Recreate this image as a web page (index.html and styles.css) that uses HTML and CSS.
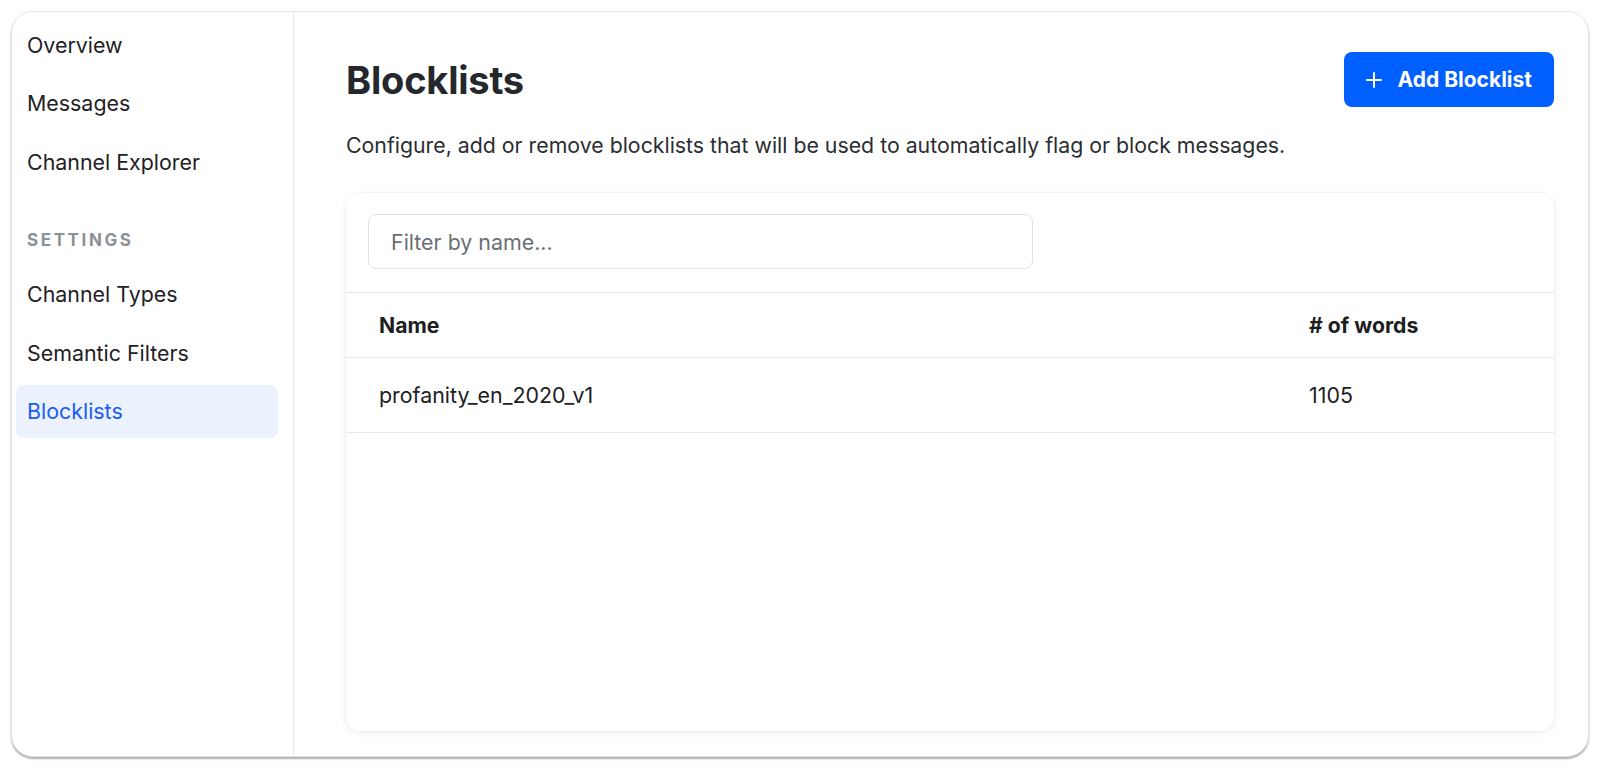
FILE: index.html
```html
<!DOCTYPE html>
<html lang="en">
<head>
  <meta charset="UTF-8" />
  <meta name="viewport" content="width=device-width, initial-scale=1.0" />
  <title>Blocklists</title>
  <link rel="stylesheet" href="styles.css">
</head>
<body>
  <div class="app">
    <nav class="sidebar">
      <a class="nav-item">Overview</a>
      <a class="nav-item">Messages</a>
      <a class="nav-item">Channel Explorer</a>

      <div class="nav-label">Settings</div>
      <a class="nav-item">Channel Types</a>
      <a class="nav-item">Semantic Filters</a>
      <a class="nav-item active">Blocklists</a>
    </nav>

    <main class="content">
      <header class="page-head">
        <h1>Blocklists</h1>
        <button class="btn-primary">
          <svg width="16" height="16" viewBox="0 0 16 16" fill="none" stroke="currentColor" stroke-width="2" stroke-linecap="round">
            <path d="M8 1v14M1 8h14" />
          </svg>
          Add Blocklist
        </button>
      </header>
      <p class="page-desc">Configure, add or remove blocklists that will be used to automatically flag or block messages.</p>

      <section class="card">
        <div class="card-toolbar">
          <input class="filter" type="text" placeholder="Filter by name...">
        </div>
        <table class="list">
          <thead>
            <tr><th>Name</th><th class="col-count"># of words</th></tr>
          </thead>
          <tbody>
            <tr><td>profanity_en_2020_v1</td><td class="col-count">1105</td></tr>
          </tbody>
        </table>
      </section>
    </main>
  </div>
</body>
</html>
```

FILE: styles.css
```css
* { box-sizing: border-box; }
body { margin: 0; background: #fff; font-family: Inter, "Noto Sans", sans-serif; color: #1e2024; }

.app { display: flex; margin: 11px; height: 746px; border: 1px solid #e2e3e4; border-radius: 22px; box-shadow: 0 2px 2px rgba(0,0,0,0.32); overflow: hidden; background: #fff; }

/* left navigation */
.sidebar { width: 282px; flex-shrink: 0; border-right: 1px solid #e7e8ea; padding: 6px 15px 0 4px; display: flex; flex-direction: column; gap: 5.5px; }
.nav-item { display: flex; align-items: center; height: 53px; padding: 0 11px; border-radius: 8px; font-size: 21.4px; color: #1f2125; cursor: pointer; }
.nav-item.active { background: #ebf2fe; color: #1a5cf6; }
.nav-label { margin: 37px 0 12.5px; padding: 0 11px; font-size: 17px; line-height: 19px; font-weight: 700; letter-spacing: 2.6px; text-transform: uppercase; color: #8b9196; }

/* main area */
.content { flex: 1; padding: 40px 34px 25px 52px; display: flex; flex-direction: column; }
.page-head { display: flex; align-items: center; justify-content: space-between; }
.page-head h1 { margin: 0; font-size: 38px; font-weight: 700; letter-spacing: -0.2px; color: #24272b; }
.btn-primary { display: flex; align-items: center; gap: 16px; height: 55px; padding: 0 22px; background: #005fff; color: #fff; border: none; border-radius: 8px; font-family: inherit; font-size: 21px; font-weight: 700; cursor: pointer; }
.page-desc { margin: 24px 0 34px; font-size: 21.3px; line-height: 28px; color: #2a2d31; }

.card { flex: 1; border-radius: 14px; box-shadow: 0 0 0 1px rgba(0,0,0,0.03), 0 2px 8px rgba(0,0,0,0.06); overflow: hidden; }
.card-toolbar { padding: 21px 22px 23px; border-bottom: 1px solid #e8e9eb; }
.filter { width: 665px; height: 55px; padding: 0 22px; border: 1px solid #e0e2e5; border-radius: 8px; font-family: inherit; font-size: 21.4px; color: #1e2024; outline: none; }
.filter::placeholder { color: #6a6f75; }

.list { width: 100%; border-collapse: collapse; font-size: 21.4px; }
.list th, .list td { text-align: left; padding: 0 33px; border-bottom: 1px solid #e8e9eb; }
.list th { height: 64px; font-weight: 700; font-size: 21.2px; color: #1c1e22; }
.list td { height: 75px; color: #1e2024; }
.list .col-count { width: 278px; }
```
